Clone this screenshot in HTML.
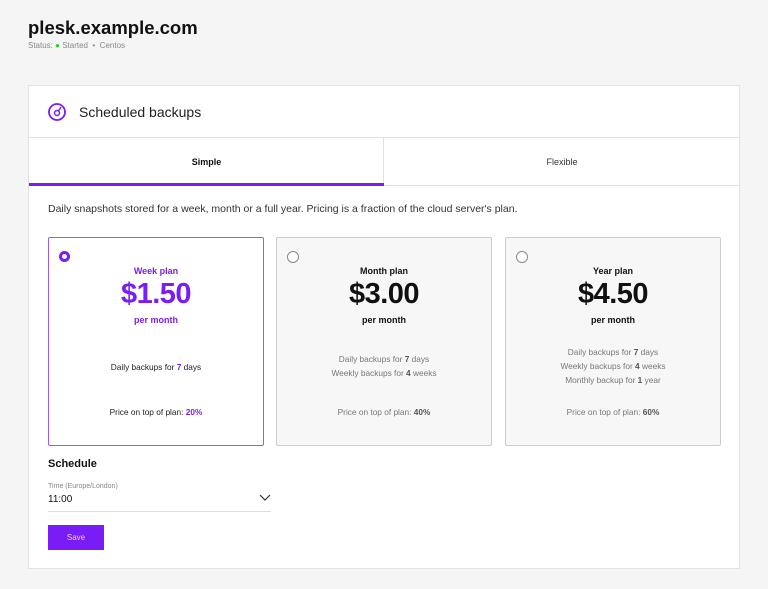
<!DOCTYPE html><html><head><style>
body{margin:0;width:768px;height:589px;background:#f5f5f5;font-family:"Liberation Sans",sans-serif;color:#111;position:relative;overflow:hidden}
.a{position:absolute}
.card{position:absolute;left:28px;top:85px;width:712px;height:484px;background:#fff;border:1px solid #e2e2e2;box-sizing:border-box}
.plan{position:absolute;top:237px;width:216px;height:209px;box-sizing:border-box;border:1px solid #ccc;background:#f7f7f7;border-radius:2px;text-align:center;color:#777;font-size:8.3px}
.plan .t{position:absolute;top:28px;width:100%;font-size:9px;font-weight:bold;color:#111}
.plan .p{position:absolute;top:40px;width:100%;font-size:29px;font-weight:bold;color:#111;letter-spacing:-0.5px}
.plan .m{position:absolute;top:77px;width:100%;font-size:9px;font-weight:bold;color:#111}
.plan .r{position:absolute;left:10px;top:13px;width:10px;height:10px;border:1px solid #888;border-radius:50%;background:#fff}
.plan .d{position:absolute;width:100%;line-height:14px}
b{color:#555}
</style></head><body>
<div class="a" style="left:28px;top:17px;font-size:18.5px;font-weight:bold">plesk.example.com</div>
<div class="a" style="left:28px;top:41px;font-size:8px;color:#888">Status: <span style="color:#3c3">●</span> Started &nbsp;•&nbsp; Centos</div>
<div class="card"></div>
<svg class="a" style="left:47px;top:102px" width="20" height="20" viewBox="0 0 20 20"><circle cx="10" cy="10" r="8" fill="none" stroke="#7a1cf5" stroke-width="1.8"/><circle cx="10" cy="11" r="2.5" fill="none" stroke="#7a1cf5" stroke-width="1.5"/><path d="M11.5 9L14 5" stroke="#7a1cf5" stroke-width="1.5"/></svg>
<div class="a" style="left:79px;top:104px;font-size:14px;color:#222">Scheduled backups</div>
<div class="a" style="left:29px;top:137px;width:710px;height:1px;background:#e2e2e2"></div>
<div class="a" style="left:383px;top:138px;width:1px;height:47px;background:#e2e2e2"></div>
<div class="a" style="left:29px;top:185px;width:710px;height:1px;background:#e2e2e2"></div>
<div class="a" style="left:29px;top:183px;width:355px;height:3px;background:#7a1cf5"></div>
<div class="a" style="left:29px;top:157px;width:355px;text-align:center;font-size:9px;font-weight:bold">Simple</div>
<div class="a" style="left:384px;top:157px;width:356px;text-align:center;font-size:9px;color:#333">Flexible</div>
<div class="a" style="left:48px;top:203px;font-size:10.5px;color:#333">Daily snapshots stored for a week, month or a full year. Pricing is a fraction of the cloud server's plan.</div>
<div class="plan" style="left:48px;background:#fff;border-color:#9b5cf5;color:#222">
<div class="r" style="border:3px solid #7a1cf5;width:5px;height:5px"></div>
<div class="t" style="color:#7a1cf5">Week plan</div><div class="p" style="color:#7a1cf5">$1.50</div><div class="m" style="color:#7a1cf5">per month</div>
<div class="d" style="top:122px">Daily backups for <b style="color:#7a1cf5">7</b> days</div>
<div class="d" style="top:167px">Price on top of plan: <b style="color:#7a1cf5">20%</b></div></div>
<div class="plan" style="left:276px"><div class="r"></div><div class="t">Month plan</div><div class="p">$3.00</div><div class="m">per month</div>
<div class="d" style="top:114px">Daily backups for <b>7</b> days<br>Weekly backups for <b>4</b> weeks</div>
<div class="d" style="top:167px">Price on top of plan: <b>40%</b></div></div>
<div class="plan" style="left:505px"><div class="r"></div><div class="t">Year plan</div><div class="p">$4.50</div><div class="m">per month</div>
<div class="d" style="top:107px">Daily backups for <b>7</b> days<br>Weekly backups for <b>4</b> weeks<br>Monthly backup for <b>1</b> year</div>
<div class="d" style="top:167px">Price on top of plan: <b>60%</b></div></div>
<div class="a" style="left:48px;top:458px;font-size:11px;font-weight:bold">Schedule</div>
<div class="a" style="left:48px;top:483px;font-size:7px;color:#888">Time (Europe/London)</div>
<div class="a" style="left:48px;top:494px;font-size:10px">11:00</div>
<svg class="a" style="left:259px;top:494px" width="12" height="8"><path d="M1 1L6 6L11 1" fill="none" stroke="#333" stroke-width="1.2"/></svg>
<div class="a" style="left:48px;top:511px;width:223px;height:1px;background:#ddd"></div>
<div class="a" style="left:48px;top:525px;width:56px;height:25px;background:#7a1cf5;color:#ddd;font-size:8px;text-align:center;line-height:25px">Save</div>
</body></html>
